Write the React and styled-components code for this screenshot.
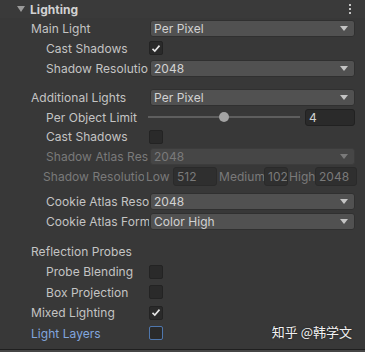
import React from "react";
import styled, { createGlobalStyle } from "styled-components";

const GlobalStyle = createGlobalStyle`
	html, body {
		margin: 0;
		padding: 0;
		background: #383838;
	}
	* {
		box-sizing: border-box;
	}
`;

const Panel = styled.div`
	position: relative;
	width: 365px;
	height: 352px;
	overflow: hidden;
	background: #383838;
	font-family: Inter, "Noto Sans", sans-serif;
	font-size: 12px;
	letter-spacing: 0.05px;
	color: #c4c4c4;
	display: flex;
	flex-direction: column;
`;

const Header = styled.div`
	height: 18px;
	display: flex;
	align-items: center;
	padding-left: 17px;
	padding-right: 14px;
	background: #3a3a3a;
`;

const Arrow = styled.span`
	width: 0;
	height: 0;
	border-left: 4px solid transparent;
	border-right: 4px solid transparent;
	border-top: 6px solid #9a9a9a;
	margin-right: 5px;
`;

const Title = styled.span`
	flex: 1;
	font-weight: 700;
	font-size: 12px;
	color: #d2d2d2;
`;

const Kebab = styled.span`
	display: flex;
	flex-direction: column;
	gap: 2px;
	& > i {
		width: 2px;
		height: 2px;
		background: #c4c4c4;
	}
`;

const Body = styled.div`
	flex: 1;
	display: flex;
	flex-direction: column;
`;

const Group = styled.div`
	margin-top: ${(p) => p.$gap || 0}px;
`;

const Row = styled.div`
	height: ${(p) => p.$h || 20}px;
	display: flex;
	align-items: center;
`;

const Label = styled.div`
	width: 149px;
	padding-left: ${(p) => (p.$indent ? 46 : 31)}px;
	white-space: nowrap;
	overflow: hidden;
	color: ${(p) => (p.$disabled ? "#7a7a7a" : p.$blue ? "#82a6de" : "#c4c4c4")};
`;

const Dropdown = styled.div`
	width: 205px;
	height: 17px;
	margin-left: 1px;
	display: flex;
	align-items: center;
	padding: 0 6px 0 3px;
	border-radius: 3px;
	background: ${(p) => (p.$disabled ? "#464646" : "#515151")};
	border: 1px solid ${(p) => (p.$disabled ? "#3c3c3c" : "#303030")};
	color: ${(p) => (p.$disabled ? "#7a7a7a" : "#d2d2d2")};
	& > span {
		flex: 1;
	}
	&::after {
		content: "";
		border-left: 4px solid transparent;
		border-right: 4px solid transparent;
		border-top: 5px solid ${(p) => (p.$disabled ? "#7a7a7a" : "#c4c4c4")};
	}
`;

const Check = styled.div`
	width: 14px;
	height: 14px;
	border-radius: 2px;
	background: #2a2a2a;
	border: 1px solid ${(p) => (p.$focus ? "#4f77ad" : "#232323")};
	display: flex;
	align-items: center;
	justify-content: center;
`;

const Slider = styled.div`
	position: relative;
	width: 152px;
	height: 12px;
	margin-left: -1px;
	display: flex;
	align-items: center;
	&::before {
		content: "";
		width: 100%;
		height: 2px;
		background: #5e5e5e;
	}
`;

const Thumb = styled.div`
	position: absolute;
	top: 1px;
	width: 10px;
	height: 10px;
	border-radius: 50%;
	background: #a3a3a3;
`;

const NumberField = styled.div`
	width: ${(p) => p.$w}px;
	height: ${(p) => p.$hgt || 17}px;
	margin-left: ${(p) => p.$ml || 0}px;
	display: flex;
	align-items: center;
	padding-left: 3px;
	border-radius: 3px;
	overflow: hidden;
	white-space: nowrap;
	background: ${(p) => (p.$disabled ? "#2f2f2f" : "#2a2a2a")};
	border: 1px solid ${(p) => (p.$disabled ? "#2a2a2a" : "#212121")};
	color: ${(p) => (p.$disabled ? "#7a7a7a" : "#d2d2d2")};
`;

const TierLabel = styled.div`
	width: ${(p) => p.$w}px;
	padding-left: ${(p) => p.$pl || 0}px;
	white-space: nowrap;
	overflow: hidden;
	color: #7a7a7a;
`;

const BottomBar = styled.div`
	height: 3px;
	border-top: 1px solid #1f1f1f;
	background: #464646;
`;

const Watermark = styled.div`
	position: absolute;
	right: 13px;
	bottom: 11px;
	font-family: "Noto Sans CJK SC", "Noto Sans", sans-serif;
	font-size: 13px;
	letter-spacing: 0;
	color: #f2f2f2;
	text-shadow: 0 0 2px rgba(0, 0, 0, 0.6);
`;

const Tick = () => (
	<svg width="10" height="9" viewBox="0 0 10 9">
		<path d="M1.5 4.8 L3.8 7 L8.5 1.6" fill="none" stroke="#e6e6e6" strokeWidth="1.6" />
	</svg>
);

const DropRow = ({ label, value, indent, disabled }) => (
	<Row>
		<Label $indent={indent} $disabled={disabled}>{label}</Label>
		<Dropdown $disabled={disabled}>
			<span>{value}</span>
		</Dropdown>
	</Row>
);

const CheckRow = ({ label, checked, indent, blue, h }) => (
	<Row $h={h}>
		<Label $indent={indent} $blue={blue}>{label}</Label>
		<Check $focus={blue}>{checked && <Tick />}</Check>
	</Row>
);

export default function App() {
	return (
		<>
			<GlobalStyle />
			<Panel>
				<Header>
					<Arrow />
					<Title>Lighting</Title>
					<Kebab>
						<i />
						<i />
						<i />
					</Kebab>
				</Header>
				<Body>
					<Group>
						<DropRow label="Main Light" value="Per Pixel" />
						<CheckRow label="Cast Shadows" checked indent />
						<DropRow label="Shadow Resolutio" value="2048" indent />
					</Group>
					<Group $gap={9}>
						<DropRow label="Additional Lights" value="Per Pixel" />
						<Row>
							<Label $indent>Per Object Limit</Label>
							<Slider>
								<Thumb style={{ left: `${(4 / 8) * 152 - 5}px` }} />
							</Slider>
							<NumberField $w={50} $ml={5}>4</NumberField>
						</Row>
						<CheckRow label="Cast Shadows" indent h={19} />
						<DropRow label="Shadow Atlas Res" value="2048" indent disabled />
						<Row $h={21}>
							<TierLabel $w={144} $pl={43}>Shadow Resolutio</TierLabel>
							<TierLabel $w={29} $pl={2}>Low</TierLabel>
							<NumberField $w={44} $hgt={19} $disabled>512</NumberField>
							<TierLabel $w={47} $pl={2}>Medium</TierLabel>
							<NumberField $w={24} $hgt={19} $disabled>102</NumberField>
							<TierLabel $w={27} $pl={1}>High</TierLabel>
							<NumberField $w={42} $hgt={19} $disabled>2048</NumberField>
						</Row>
					</Group>
					<Group $gap={4}>
						<DropRow label="Cookie Atlas Reso" value="2048" indent />
						<DropRow label="Cookie Atlas Form" value="Color High" indent />
					</Group>
					<Group $gap={10}>
						<Row $h={20.5}>
							<Label>Reflection Probes</Label>
						</Row>
						<CheckRow label="Probe Blending" indent h={20.5} />
						<CheckRow label="Box Projection" indent h={20.5} />
						<CheckRow label="Mixed Lighting" checked h={20.5} />
						<CheckRow label="Light Layers" blue h={20.5} />
					</Group>
				</Body>
				<BottomBar />
				<Watermark>知乎 @韩学文</Watermark>
			</Panel>
		</>
	);
}
